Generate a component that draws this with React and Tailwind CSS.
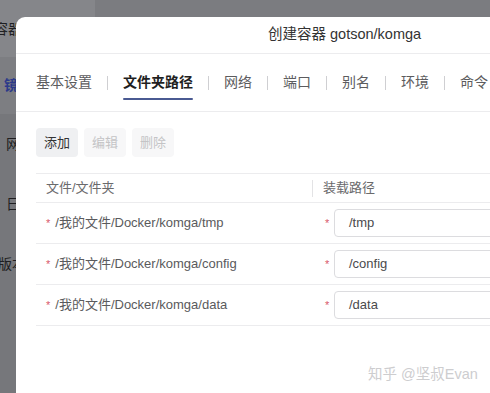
import React from 'react';

const font = { fontFamily: '"Liberation Sans", "Noto Sans CJK SC", sans-serif' };

const tabs = ['基本设置', '文件夹路径', '网络', '端口', '别名', '环境', '命令'];

const rows = [
    { host: '/我的文件/Docker/komga/tmp', mount: '/tmp' },
    { host: '/我的文件/Docker/komga/config', mount: '/config' },
    { host: '/我的文件/Docker/komga/data', mount: '/data' },
];

const Sidebar = () => (
    <div className="absolute inset-0 flex">
        <div className="w-[95px] flex flex-col bg-[#76777b]">
            <div className="h-[57px] bg-[#85868a] flex items-center -ml-[6px] pt-[2px] text-[14px] text-[#1f1f22]">容器管理</div>
            <div className="h-[57px] bg-[#7d7e82] flex items-center pl-[4px] text-[14px] text-[#2c3a8a] font-semibold">镜像</div>
            <div className="h-[60px] flex items-center pl-[6px] text-[14px] text-[#1f1f22]">网络</div>
            <div className="h-[60px] flex items-center pl-[6px] text-[14px] text-[#1f1f22]">日志</div>
            <div className="h-[60px] flex items-center -ml-[2px] text-[14px] text-[#1f1f22]">版本</div>
        </div>
        <div className="flex-1 flex flex-col bg-[#6e6f73]">
            <div className="h-[17px] bg-[#7b7c80]" />
        </div>
    </div>
);

const Btn = ({ children, active }) => (
    <button
        className={
            active
                ? 'h-[29px] w-[42px] rounded-[4px] bg-[#eff0f2] text-[13px] text-[#333]'
                : 'h-[29px] w-[42px] rounded-[4px] bg-[#f7f7f8] text-[13px] text-[#c4c4c6]'
        }
    >
        {children}
    </button>
);

export default function App() {
    return (
        <div className="relative w-[490px] h-[393px] overflow-hidden" style={font}>
            <Sidebar />
            <div className="absolute left-[16px] top-[17px] right-[-30px] bottom-[-30px] bg-white rounded-tl-[9px] flex flex-col">
                <div className="h-[37px] flex items-center border-b border-[#ececee] pl-[252px] text-[14.5px] text-[#333]">
                    创建容器 gotson/komga
                </div>
                <div className="h-[58px] flex items-center border-b border-[#ececee] pl-[20px] text-[14px]">
                    {tabs.map((t, i) => (
                        <div key={t} className="flex items-center">
                            {i > 0 && <div className="w-px h-[14px] bg-[#cfcfd2] mx-[15px]" />}
                            <div
                                className={
                                    i === 1
                                        ? 'relative text-[#1f1f1f] font-semibold'
                                        : 'text-[#5c5c5e]'
                                }
                            >
                                {t}
                                {i === 1 && (
                                    <div className="absolute left-0 right-0 top-[26px] h-[2px] rounded-full bg-[#4a5a92]" />
                                )}
                            </div>
                        </div>
                    ))}
                </div>
                <div className="flex gap-[6px] pl-[20px] pt-[16px]">
                    <Btn active>添加</Btn>
                    <Btn>编辑</Btn>
                    <Btn>删除</Btn>
                </div>
                <div className="ml-[20px] mt-[16px] border-t border-[#ececee] text-[13px]">
                    <div className="h-[29px] flex items-center border-b border-[#ececee] text-[#6a6a6c]">
                        <div className="w-[276px] pl-[10px]">文件/文件夹</div>
                        <div className="w-px h-[17px] bg-[#e3e3e5]" />
                        <div className="pl-[10px]">装载路径</div>
                    </div>
                    {rows.map((r) => (
                        <div key={r.host} className="h-[41px] flex items-center border-b border-[#ececee] text-[#5a5a5c]">
                            <div className="w-[277px] pl-[10px] flex items-center">
                                <span className="text-[#d9576a] text-[11px] mr-[5px]">*</span>
                                {r.host}
                            </div>
                            <div className="flex items-center flex-1">
                                <span className="text-[#d9576a] text-[11px] w-[21px] pl-[12px]">*</span>
                                <div className="flex-1 h-[28px] border border-[#dcdcdf] rounded-[4px] flex items-center pl-[14px] text-[#4a4a4c]">
                                    {r.mount}
                                </div>
                            </div>
                        </div>
                    ))}
                </div>
                <div className="mt-[38px] pl-[352px] text-[14.5px] text-[#cdcdcf]">知乎 @坚叔Evan</div>
            </div>
        </div>
    );
}
